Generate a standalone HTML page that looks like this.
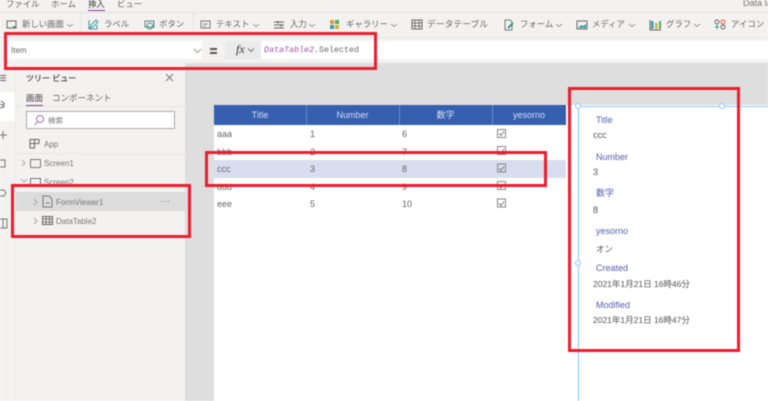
<!DOCTYPE html>
<html lang="ja">
<head>
<meta charset="utf-8">
<style>
html,body{margin:0;padding:0;background:#fff}
#p{position:relative;width:768px;height:401px;overflow:hidden;background:#fff;font-family:"Liberation Sans","Noto Sans CJK JP",sans-serif;color:#555;filter:blur(.45px)}
#p div,#p span.t,#p svg{position:absolute}
.t{position:absolute;white-space:nowrap;line-height:12px}
.m{font-size:8.4px;color:#666}
.r{font-size:8.4px;color:#666;top:18px}
.th{font-size:9px;color:#d5def0;top:109px;text-align:center}
.c{font-size:9px;color:#666}
.l{font-size:9px;color:#5560a8;left:596px}
.v{font-size:8.5px;color:#555;left:593px}
.red{position:absolute;border:3px solid #ee1c2e;box-sizing:border-box}
.h{position:absolute;width:4px;height:4px;border:1.500px solid #8cc4f5;border-radius:50%;background:#fff}
.tr{font-size:8px;color:#777}
</style>
</head>
<body>
<div id="p">
  <!-- menu -->
  <div style="left:0;top:0;width:768px;height:12px;background:#f3f2f1"></div>
  <div style="left:0;top:12px;width:768px;height:1px;background:#e2e1e0"></div>
  <span class="t m" style="left:6px;top:-2px">ファイル</span>
  <span class="t m" style="left:51px;top:-2px">ホーム</span>
  <span class="t m" style="left:88px;top:-2px;color:#444">挿入</span>
  <div style="left:88px;top:9.500px;width:17px;height:1.500px;background:#7b3a8c"></div>
  <span class="t m" style="left:117px;top:-2px">ビュー</span>
  <span class="t" style="left:743px;top:-3px;font-size:9px;color:#777">Data la</span>

  <!-- ribbon -->
  <div style="left:0;top:13px;width:768px;height:24px;background:#f3f2f1"></div>
  <div style="left:80px;top:13px;width:1px;height:22px;background:#e4e3e2"></div>
  <div style="left:193px;top:13px;width:1px;height:22px;background:#e4e3e2"></div>
  <svg style="left:0;top:13px" width="768" height="24" viewBox="0 13 768 24" fill="none">
    <rect x="7" y="21" width="9" height="7" stroke="#666"/><rect x="13" y="26" width="3" height="2" fill="#2a9d8f"/>
    <path d="M90 21h-1v8h8v-4M90 28l1-3 5-5 2 2-5 5z" stroke="#3d9aa0"/>
    <rect x="145" y="21" width="9" height="6" stroke="#777"/><circle cx="150" cy="26" r="3" stroke="#2a9d8f"/>
    <rect x="201" y="21" width="9" height="7" stroke="#777"/><path d="M203 24h5M203 26h3" stroke="#888"/>
    <path d="M274 22h10M274 25h10M274 28h10" stroke="#666"/><path d="M278 21v3M281 24v3" stroke="#666"/>
    <rect x="330" y="20" width="4" height="4" fill="#d99a3d"/><rect x="335" y="20" width="4" height="4" fill="#59a85c"/><rect x="330" y="25" width="4" height="4" fill="#3f9aa8"/><rect x="335" y="25" width="4" height="4" fill="#c9b540"/>
    <rect x="412" y="20" width="10" height="9" stroke="#666"/><path d="M412 23h10M412 26h10M415 20v9M419 20v9" stroke="#777"/>
    <path d="M505 20h5l2 2v8h-7z" stroke="#777"/><path d="M508 28l5-5" stroke="#2a9d8f" stroke-width="2"/>
    <rect x="577" y="21" width="10" height="8" stroke="#666"/><path d="M578 28l3-3 2 1 3-2v4z" fill="#3f9aa8"/>
    <rect x="651" y="21" width="2.500" height="8" fill="#3f9aa8"/><rect x="655" y="23" width="2.500" height="6" fill="#c9b540"/><rect x="659" y="21" width="2" height="8" fill="#59a85c"/><path d="M650 20v10h11" stroke="#666"/>
    <circle cx="717" cy="22" r="2" stroke="#666"/><circle cx="723" cy="22" r="2" stroke="#d9604a"/><path d="M715 27h4M717 25v4" stroke="#2a9d8f"/><circle cx="723" cy="27" r="2" stroke="#666"/>
    <path d="M67 24l3 2.500 3-2.500M253 24l3 2.500 3-2.500M309 24l3 2.500 3-2.500M391 24l3 2.500 3-2.500M556 24l3 2.500 3-2.500M629 24l3 2.500 3-2.500M694 24l3 2.500 3-2.500" stroke="#999"/>
  </svg>
  <span class="t r" style="left:22px">新しい画面</span>
  <span class="t r" style="left:104px">ラベル</span>
  <span class="t r" style="left:159px">ボタン</span>
  <span class="t r" style="left:216px">テキスト</span>
  <span class="t r" style="left:290px">入力</span>
  <span class="t r" style="left:346px">ギャラリー</span>
  <span class="t r" style="left:427px;font-size:8.800px">データテーブル</span>
  <span class="t r" style="left:520px">フォーム</span>
  <span class="t r" style="left:592px">メディア</span>
  <span class="t r" style="left:666px">グラフ</span>
  <span class="t r" style="left:731px">アイコン</span>

  <!-- formula bar -->
  <div style="left:0;top:37px;width:768px;height:26px;background:#f3f2f1;border-top:1px solid #e6e5e4;box-sizing:border-box"></div>
  <div style="left:7px;top:41px;width:195px;height:18px;background:#fff"></div>
  <span class="t" style="left:11px;top:45px;font-size:8px;color:#666">Item</span>
  <svg style="left:193px;top:47px" width="10" height="8" fill="none"><path d="M1 2l3.500 3.500L8 2" stroke="#999"/></svg>
  <div style="left:210px;top:48px;width:7px;height:1.500px;background:#555"></div>
  <div style="left:210px;top:52px;width:7px;height:1.500px;background:#555"></div>
  <div style="left:225px;top:41px;width:36px;height:18px;background:#ebeaea"></div>
  <span class="t" style="left:236px;top:43px;font-family:'Liberation Serif',serif;font-style:italic;font-size:12px;color:#333">fx</span>
  <svg style="left:247px;top:47px" width="9" height="7" fill="none"><path d="M1 1.500l3 3 3-3" stroke="#777"/></svg>
  <div style="left:261px;top:41px;width:507px;height:18px;background:#fff"></div>
  <span class="t" style="left:264px;top:44px;font-family:'Liberation Mono',monospace;font-size:8.340px;color:#666"><i style="color:#a050a8">DataTable2</i>.Selected</span>

  <!-- canvas -->
  <div style="left:185px;top:63px;width:583px;height:42px;background:#dedede"></div>
  <div style="left:185px;top:63px;width:29px;height:338px;background:#dedede"></div>

  <!-- left rail -->
  <div style="left:0;top:63px;width:15px;height:338px;background:#f3f2f1;border-right:1px solid #e9e8e7"></div>
  <div style="left:0;top:92px;width:15px;height:29px;background:#fff"></div>
  <svg style="left:0;top:70px" width="15" height="165" viewBox="0 70 15 165" fill="none" stroke="#666">
    <path d="M0 75.500h6M0 78h6M0 80.500h6"/>
    <path d="M0 104l4 2v-3l-3-2M0 108l4-1"/>
    <path d="M0 135h7M3 131v8" stroke="#777"/>
    <path d="M0 160h5v7H0" stroke="#777"/>
    <path d="M0 190h4l2 3-2 3H0" stroke="#777"/>
    <path d="M0 219h7v9H0M3 219v9" stroke="#777"/>
  </svg>

  <!-- tree panel -->
  <div style="left:16px;top:63px;width:169px;height:338px;background:#f3f2f1"></div>
  <span class="t" style="left:26px;top:73px;font-size:8px;color:#444;-webkit-text-stroke:.2px #444">ツリー ビュー</span>
  <svg style="left:165px;top:73px" width="10" height="10" fill="none"><path d="M1 1l7 7M8 1L1 8" stroke="#777"/></svg>
  <span class="t" style="left:26px;top:92px;font-size:8.500px;color:#444">画面</span>
  <div style="left:26px;top:104.500px;width:17px;height:1.500px;background:#7b3a8c"></div>
  <span class="t" style="left:52px;top:92px;font-size:8.500px;color:#666">コンポーネント</span>
  <div style="left:16px;top:106px;width:169px;height:1px;background:#e6e5e4"></div>
  <div style="left:26px;top:111px;width:149px;height:18px;background:#fff;border:1px solid #aaa;box-sizing:border-box"></div>
  <svg style="left:33px;top:114px" width="12" height="13" fill="none"><circle cx="7" cy="5" r="3.500" stroke="#a86cc0"/><path d="M4.500 8L1.500 11" stroke="#a86cc0"/></svg>
  <span class="t" style="left:48px;top:115px;font-size:7.500px;color:#777">検索</span>
  <svg style="left:29px;top:138px" width="12" height="12" fill="none"><path d="M1 1.500h9v4H1zM5.500 1.500V10H1V5.500" stroke="#666"/></svg>
  <span class="t tr" style="left:44px;top:139px">App</span>
  <div style="left:16px;top:153px;width:169px;height:1px;background:#e6e5e4"></div>
  <svg style="left:20px;top:159px" width="8" height="9" fill="none"><path d="M2 1l3 3-3 3" stroke="#aaa"/></svg>
  <div style="left:30px;top:159px;width:9px;height:7px;border:1px solid #777;border-radius:1px"></div>
  <span class="t tr" style="left:44px;top:158px">Screen1</span>
  <svg style="left:20px;top:178px" width="8" height="6" fill="none"><path d="M1 1l3 3 3-3" stroke="#aaa"/></svg>
  <div style="left:30px;top:178px;width:9px;height:6px;border:1px solid #777;border-bottom:0"></div>
  <span class="t tr" style="left:44px;top:177px">Screen2</span>
  <div style="left:16px;top:192px;width:169px;height:19px;background:#dcdcdc"></div>
  <svg style="left:32px;top:198px" width="7" height="9" fill="none"><path d="M2 1l3 3-3 3" stroke="#aaa"/></svg>
  <svg style="left:42px;top:195px" width="11" height="13" fill="none"><path d="M1 1h6l3 3v8H1z" stroke="#777"/><path d="M3.500 8h4" stroke="#777"/></svg>
  <span class="t tr" style="left:56px;top:197px">FormViewer1</span>
  <span class="t" style="left:160px;top:195px;font-size:9px;color:#666;letter-spacing:.5px">···</span>
  <svg style="left:32px;top:217px" width="7" height="9" fill="none"><path d="M2 1l3 3-3 3" stroke="#aaa"/></svg>
  <svg style="left:42px;top:216px" width="11" height="10" fill="none"><rect x=".5" y=".5" width="10" height="8" stroke="#666"/><path d="M.5 3h10M.5 6h10M4 .5v8M7.500 .5v8" stroke="#777"/></svg>
  <span class="t tr" style="left:56px;top:216px">DataTable2</span>

  <!-- table -->
  <div style="left:214px;top:105px;width:352px;height:20px;background:#365fb0"></div>
  <div style="left:306px;top:105px;width:1px;height:20px;background:#6c8cc8"></div>
  <div style="left:399px;top:105px;width:1px;height:20px;background:#6c8cc8"></div>
  <div style="left:492px;top:105px;width:1px;height:20px;background:#6c8cc8"></div>
  <span class="t th" style="left:214px;width:92px">Title</span>
  <span class="t th" style="left:306px;width:93px">Number</span>
  <span class="t th" style="left:399px;width:93px">数字</span>
  <span class="t th" style="left:492px;width:74px">yesorno</span>
  <div style="left:214px;top:160px;width:352px;height:17.500px;background:#d8deef"></div>

  <span class="t c" style="left:217px;top:128px">aaa</span><span class="t c" style="left:310px;top:128px">1</span><span class="t c" style="left:402px;top:128px">6</span>
  <span class="t c" style="left:217px;top:146px">bbb</span><span class="t c" style="left:310px;top:146px">2</span><span class="t c" style="left:402px;top:146px">7</span>
  <span class="t c" style="left:217px;top:163px">ccc</span><span class="t c" style="left:310px;top:163px">3</span><span class="t c" style="left:402px;top:163px">8</span>
  <span class="t c" style="left:217px;top:181px">ddd</span><span class="t c" style="left:310px;top:181px">4</span><span class="t c" style="left:402px;top:181px">9</span>
  <span class="t c" style="left:217px;top:198px">eee</span><span class="t c" style="left:310px;top:198px">5</span><span class="t c" style="left:402px;top:198px">10</span>

  <svg style="left:497px;top:129px" width="10" height="80" viewBox="0 0 10 80" fill="none">
    <g stroke="#888"><rect x=".5" y=".5" width="8" height="8" fill="#fff"/><rect x=".5" y="17.500" width="8" height="8" fill="#fff"/><rect x=".5" y="35" width="8" height="8" fill="#d8deef"/><rect x=".5" y="52.500" width="8" height="8" fill="#fff"/><rect x=".5" y="70" width="8" height="8" fill="#fff"/></g>
    <g stroke="#777"><path d="M2 4.500l2 2 3-4M2 22l2 2 3-4M2 39.500l2 2 3-4M2 57l2 2 3-4M2 74.500l2 2 3-4"/></g>
  </svg>

  <!-- form viewer -->
  <div style="left:578px;top:106px;width:1px;height:295px;background:#8cc4f5"></div>
  <div style="left:578px;top:106px;width:190px;height:1px;background:#8cc4f5"></div>
  <div class="h" style="left:575px;top:103px"></div>
  <div class="h" style="left:719px;top:103px"></div>
  <div class="h" style="left:575px;top:260px"></div>

  <span class="t l" style="top:114px">Title</span>
  <span class="t v" style="top:129px;font-size:9px">ccc</span>
  <span class="t l" style="top:151px">Number</span>
  <span class="t v" style="top:166px;font-size:9px">3</span>
  <span class="t l" style="top:187px">数字</span>
  <span class="t v" style="top:204px;font-size:9px">8</span>
  <span class="t l" style="top:225px">yesorno</span>
  <span class="t v" style="top:243px;left:596px;font-size:8.500px">オン</span>
  <span class="t l" style="top:262px">Created</span>
  <span class="t v" style="top:278px">2021年1月21日 16時46分</span>
  <span class="t l" style="top:299px">Modified</span>
  <span class="t v" style="top:314px">2021年1月21日 16時47分</span>

  <!-- red annotations -->
  <div class="red" style="left:4px;top:32px;width:373px;height:38px"></div>
  <div class="red" style="left:11px;top:184px;width:180px;height:54px"></div>
  <div class="red" style="left:205px;top:151px;width:342px;height:36px"></div>
  <div class="red" style="left:568px;top:87px;width:172px;height:265px"></div>
</div>
</body>
</html>
